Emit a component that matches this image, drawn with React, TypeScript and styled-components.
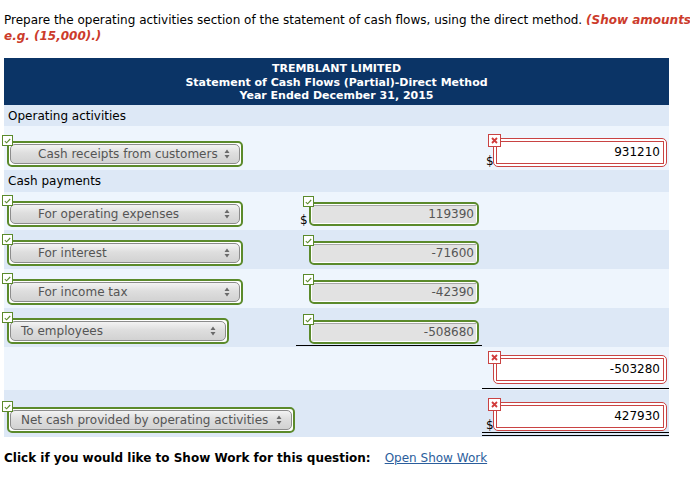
import React from 'react';
import styled, { createGlobalStyle } from 'styled-components';

const GlobalStyle = createGlobalStyle`
  html, body {
    margin: 0;
    padding: 0;
    background: #fff;
    overflow: hidden;
  }
  body {
    font-family: "DejaVu Sans", Verdana, sans-serif;
    font-size: 12px;
    color: #000;
  }
`;

const GREEN = '#5b8a2b';
const RED = '#c94343';

const Page = styled.div`
  width: 1000px;
  padding: 12px 4px 0 4px;
`;

const Instruction = styled.p`
  margin: 0 0 14px 0;
  line-height: 16px;
  white-space: nowrap;
`;

const Hint = styled.span`
  color: #cc3b2b;
  font-weight: bold;
  font-style: italic;
`;

const Sheet = styled.div`
  width: 665px;
`;

const Header = styled.div`
  background: #0b3466;
  color: #fff;
  font-weight: bold;
  font-size: 11px;
  line-height: 13.5px;
  text-align: center;
  height: 47px;
  box-sizing: border-box;
  padding-top: 4px;
`;

const Row = styled.div<{ $h: number; $dark?: boolean }>`
  display: grid;
  grid-template-columns: 292px 186px 187px;
  height: ${(p) => p.$h}px;
  background: ${(p) => (p.$dark ? '#dde8f6' : '#eef5fd')};
`;

const LabelRow = styled.div<{ $h: number }>`
  height: ${(p) => p.$h}px;
  background: #dde8f6;
  display: flex;
  align-items: center;
  padding-left: 4px;
`;

const Cell = styled.div<{ $pb?: number; $pl?: number; $line?: 'single' | 'double' }>`
  display: flex;
  align-items: flex-end;
  padding-bottom: ${(p) => p.$pb ?? 3}px;
  padding-left: ${(p) => p.$pl ?? 0}px;
  margin-bottom: ${(p) => (p.$line ? 1 : 0)}px;
  border-bottom: ${(p) =>
    p.$line === 'single' ? '1px solid #000' : p.$line === 'double' ? '4px double #000' : 'none'};
`;

const Anchor = styled.div`
  position: relative;
`;

const GreenTick = styled.span<{ $l?: number; $t?: number }>`
  position: absolute;
  left: ${(p) => p.$l ?? -5}px;
  top: ${(p) => p.$t ?? -6}px;
  width: 9px;
  height: 9px;
  background: #fff;
  border: 1px solid ${GREEN};
  display: flex;
  align-items: center;
  justify-content: center;
  z-index: 1;
`;

const RedMark = styled.span`
  position: absolute;
  left: -5px;
  top: -4px;
  width: 11px;
  height: 11px;
  background: #fff;
  border: 1px solid ${RED};
  display: flex;
  align-items: center;
  justify-content: center;
  z-index: 1;
`;

const GreenFrame = styled.div<{ $w: number }>`
  width: ${(p) => p.$w}px;
  box-sizing: border-box;
  border: 2px solid ${GREEN};
  border-radius: 5px;
  padding: 1px;
  background: #fff;
`;

const SelectBox = styled.div<{ $indent: number }>`
  height: 20px;
  box-sizing: border-box;
  border: 1px solid #8c8c8c;
  border-radius: 5px;
  background: linear-gradient(#f3f3f3, #dedede 45%, #d2d2d2);
  color: #555;
  display: flex;
  align-items: center;
  justify-content: space-between;
  padding: 0 9px 0 ${(p) => p.$indent}px;
  white-space: nowrap;
`;

const NumberBox = styled.div`
  height: 18px;
  box-sizing: border-box;
  background: #e2e2e2;
  border-top: 1px solid #a8a8a8;
  color: #555;
  text-align: right;
  padding-right: 2px;
  line-height: 17px;
`;

const Dollar = styled.span<{ $w: number }>`
  width: ${(p) => p.$w}px;
  line-height: 12px;
  flex-shrink: 0;
`;

const RedFrame = styled.div`
  width: 174px;
  box-sizing: border-box;
  border: 1px solid ${RED};
  border-radius: 5px;
  padding: 2px;
  background: #fff;
`;

const AnswerBox = styled.div`
  height: 23px;
  box-sizing: border-box;
  border: 1px solid ${RED};
  background: #fff;
  text-align: right;
  padding-right: 3px;
  line-height: 21px;
`;

const Footer = styled.div`
  margin-top: 13px;
  line-height: 16px;
  font-weight: bold;
`;

const ShowWork = styled.a`
  margin-left: 14px;
  font-weight: normal;
  color: #2b5e9c;
  text-decoration: underline;
  cursor: pointer;
`;

const Check = () => (
  <svg width="7" height="6" viewBox="0 0 7 6">
    <path d="M0.8 3.2 L2.6 4.8 L6.2 1" fill="none" stroke={GREEN} strokeWidth="1.1" />
  </svg>
);

const Cross = () => (
  <svg width="7" height="7" viewBox="0 0 7 7">
    <path d="M1 1 L6 6 M6 1 L1 6" stroke="#d13b3b" strokeWidth="1.8" />
  </svg>
);

const Arrows = () => (
  <svg width="6" height="10" viewBox="0 0 6 10">
    <path d="M3 0.5 L5.5 4 H0.5 Z M3 9.5 L5.5 6 H0.5 Z" fill="#6a6a6a" />
  </svg>
);

const Select = ({ label, w, indent }: { label: string; w: number; indent: number }) => (
  <Anchor>
    <GreenTick>
      <Check />
    </GreenTick>
    <GreenFrame $w={w}>
      <SelectBox $indent={indent}>
        <span>{label}</span>
        <Arrows />
      </SelectBox>
    </GreenFrame>
  </Anchor>
);

const Amount = ({ value }: { value: string }) => (
  <Anchor>
    <GreenTick $l={-6}>
      <Check />
    </GreenTick>
    <GreenFrame $w={170}>
      <NumberBox>{value}</NumberBox>
    </GreenFrame>
  </Anchor>
);

const Answer = ({ value }: { value: string }) => (
  <Anchor>
    <RedMark>
      <Cross />
    </RedMark>
    <RedFrame>
      <AnswerBox>{value}</AnswerBox>
    </RedFrame>
  </Anchor>
);

const payments = [
  { label: 'For operating expenses', value: '119390', indent: 27, w: 236, dollar: true },
  { label: 'For interest', value: '-71600', indent: 27, w: 236, dollar: false },
  { label: 'For income tax', value: '-42390', indent: 27, w: 236, dollar: false },
  { label: 'To employees', value: '-508680', indent: 10, w: 222, dollar: false },
];

export default function App() {
  return (
    <Page>
      <GlobalStyle />
      <Instruction>
        Prepare the operating activities section of the statement of cash flows, using the direct method.{' '}
        <Hint>(Show amounts that decrease cash with either a - sign e.g. -15,000 or in parenthesis</Hint>
        <br />
        <Hint>e.g. (15,000).)</Hint>
      </Instruction>
      <Sheet>
        <Header>
          TREMBLANT LIMITED
          <br />
          Statement of Cash Flows (Partial)-Direct Method
          <br />
          Year Ended December 31, 2015
        </Header>
        <LabelRow $h={21}>Operating activities</LabelRow>
        <Row $h={44}>
          <Cell $pl={3} $pb={3}>
            <Select label="Cash receipts from customers" w={236} indent={27} />
          </Cell>
          <Cell />
          <Cell $pl={4} $pb={3}>
            <Dollar $w={7}>$</Dollar>
            <Answer value="931210" />
          </Cell>
        </Row>
        <LabelRow $h={22}>Cash payments</LabelRow>
        {payments.map((p, i) => (
          <Row key={p.label} $h={i === 0 ? 38 : 39} $dark={i % 2 === 1}>
            <Cell $pl={3} $pb={3}>
              <Select label={p.label} w={p.w} indent={p.indent} />
            </Cell>
            <Cell $pl={4} $pb={i === 3 ? 1 : 4} $line={i === 3 ? 'single' : undefined}>
              <Dollar $w={9}>{p.dollar ? '$' : ''}</Dollar>
              <Amount value={p.value} />
            </Cell>
            <Cell />
          </Row>
        ))}
        <Row $h={43}>
          <Cell />
          <Cell />
          <Cell $pl={11} $pb={4} $line="single">
            <Answer value="-503280" />
          </Cell>
        </Row>
        <Row $h={47} $dark>
          <Cell $pl={3} $pb={4}>
            <Select label="Net cash provided by operating activities" w={288} indent={10} />
          </Cell>
          <Cell />
          <Cell $pl={4} $pb={1} $line="double">
            <Dollar $w={7}>$</Dollar>
            <Answer value="427930" />
          </Cell>
        </Row>
      </Sheet>
      <Footer>
        Click if you would like to Show Work for this question:
        <ShowWork>Open Show Work</ShowWork>
      </Footer>
    </Page>
  );
}
